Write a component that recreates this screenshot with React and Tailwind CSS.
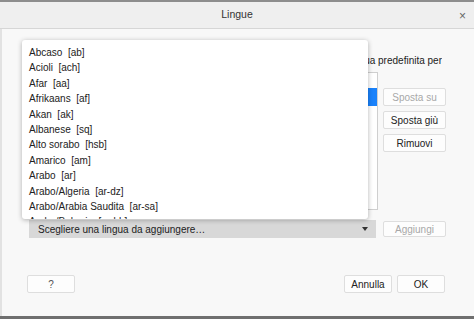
import React from "react";

const languages = [
  "Abcaso  [ab]",
  "Acioli  [ach]",
  "Afar  [aa]",
  "Afrikaans  [af]",
  "Akan  [ak]",
  "Albanese  [sq]",
  "Alto sorabo  [hsb]",
  "Amarico  [am]",
  "Arabo  [ar]",
  "Arabo/Algeria  [ar-dz]",
  "Arabo/Arabia Saudita  [ar-sa]",
  "Arabo/Bahrein  [ar-bh]",
  "Arabo/Egitto  [ar-eg]",
];

function Btn({ children, disabled, className = "" }) {
  return (
    <div
      className={`flex items-center justify-center bg-[#fdfdfd] border border-[#dedede] rounded-[2px] ${
        disabled ? "text-[#a8a8a8]" : "text-[#222]"
      } ${className}`}
    >
      {children}
    </div>
  );
}

export default function App() {
  return (
    <div
      className="w-[474px] h-[319px] flex flex-col bg-[#f8f8f8] text-[10px] text-[#222] overflow-hidden"
      style={{ fontFamily: '"Liberation Sans", Arial, sans-serif' }}
    >
      {/* window top edge */}
      <div className="h-[2px] bg-[#8d8d8d]" />

      {/* title bar */}
      <div className="h-[27px] flex items-center justify-center relative bg-[#efefef] border-b border-[#d6d6d6]">
        <span className="text-[10.5px] text-[#333]">Lingue</span>
        <span className="absolute right-[8px] top-[5px] text-[12px] text-[#666]">×</span>
      </div>

      {/* body */}
      <div className="relative flex-1 flex flex-col pl-[28px] border-l-2 border-[#e2e2e2]">
        <div className="mt-[26px] w-[412px] h-[12px] leading-[12px] overflow-hidden whitespace-nowrap text-right">
          Le lingue sono elencate in ordine di preferenza. Scegliere la lingua predefinita per
        </div>

        <div className="flex mt-[5px]">
          {/* current languages list */}
          <div className="w-[350px] h-[138px] -ml-[2px] bg-white border border-[#cfcfcf] pt-[15px]">
            <div className="h-[18px] bg-[#1a82fb] text-white pl-[6px] leading-[18px]">
              Italiano  [it]
            </div>
          </div>
          <div className="flex flex-col gap-[5px] ml-[5px] mt-[16px] w-[63px]">
            <Btn disabled className="h-[18px]">Sposta su</Btn>
            <Btn className="h-[18px]">Sposta giù</Btn>
            <Btn className="h-[18px]">Rimuovi</Btn>
          </div>
        </div>

        <div className="flex items-center mt-[10px]">
          <div className="w-[347px] h-[18px] -ml-[1px] bg-[#d8d8d8] flex items-center justify-between pl-[9px] pr-[8px]">
            <span>Scegliere una lingua da aggiungere…</span>
            <svg width="6" height="4" viewBox="0 0 6 4">
              <path d="M0 0h6L3 4z" fill="#333" />
            </svg>
          </div>
          <Btn disabled className="h-[16px] w-[63px] ml-[7px]">Aggiungi</Btn>
        </div>

        <div className="flex items-center mt-[37px] -ml-[3px]">
          <Btn className="h-[18px] w-[48px] text-[#555]">?</Btn>
          <Btn className="h-[18px] w-[48px] ml-[269px]">Annulla</Btn>
          <Btn className="h-[18px] w-[48px] ml-[5px]">OK</Btn>
        </div>

        {/* open dropdown popup */}
        <div className="absolute left-[20px] top-[11px] w-[346px] h-[179px] bg-white rounded-[3px] shadow-[0_1px_5px_rgba(0,0,0,0.3)] overflow-hidden pt-[5px] pl-[7px]">
          {languages.map((l) => (
            <div key={l} className="leading-[15.4px] whitespace-pre text-[#222]">
              {l}
            </div>
          ))}
        </div>
      </div>

      {/* window bottom edge */}
      <div className="h-[3px] bg-[#6f6f6f]" />
    </div>
  );
}
